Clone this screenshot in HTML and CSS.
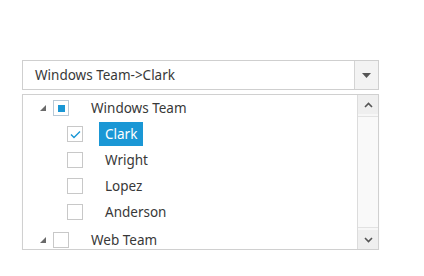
FILE: index.html
```html
<!DOCTYPE html>
<html>
<head>
<meta charset="utf-8">
<link rel="stylesheet" href="styles.css">
</head>
<body>
<div class="page">
  <div class="combo">
    <div class="combo-text">Windows Team-&gt;Clark</div>
    <div class="combo-btn">
      <svg width="9" height="5" viewBox="0 0 9 5"><path d="M0 0H9L4.5 5Z" fill="#555"/></svg>
    </div>
  </div>
  <div class="popup">
    <div class="tree">
      <div class="row lvl0">
        <span class="exp"><svg width="6" height="6" viewBox="0 0 6 6"><path d="M6 0V6H0Z" fill="#6a6a6a"/></svg></span>
        <span class="cb partial"><span class="dot"></span></span>
        <span class="label">Windows Team</span>
      </div>
      <div class="row lvl1">
        <span class="exp"></span>
        <span class="cb"><svg width="11" height="9" viewBox="0 0 11 9"><path d="M1 4.5L4 7.5L10 1.5" fill="none" stroke="#1a97d5" stroke-width="1.4"/></svg></span>
        <span class="label sel">Clark</span>
      </div>
      <div class="row lvl1">
        <span class="exp"></span>
        <span class="cb"></span>
        <span class="label">Wright</span>
      </div>
      <div class="row lvl1">
        <span class="exp"></span>
        <span class="cb"></span>
        <span class="label">Lopez</span>
      </div>
      <div class="row lvl1">
        <span class="exp"></span>
        <span class="cb"></span>
        <span class="label">Anderson</span>
      </div>
      <div class="row lvl0">
        <span class="exp"><svg width="6" height="6" viewBox="0 0 6 6"><path d="M6 0V6H0Z" fill="#6a6a6a"/></svg></span>
        <span class="cb"></span>
        <span class="label">Web Team</span>
      </div>
    </div>
    <div class="scrollbar">
      <div class="sb-btn"><svg width="9" height="6" viewBox="0 0 9 6"><path d="M1 5L4.5 1.5L8 5" fill="none" stroke="#555" stroke-width="1.6"/></svg></div>
      <div class="sb-thumb"></div>
      <div class="sb-btn"><svg width="9" height="6" viewBox="0 0 9 6"><path d="M1 1L4.5 4.5L8 1" fill="none" stroke="#555" stroke-width="1.6"/></svg></div>
    </div>
  </div>
</div>
</body>
</html>
```
FILE: styles.css
```css
html, body {
  margin: 0;
  background: #fff;
}
body {
  font-family: "Noto Sans", "Open Sans", sans-serif;
  font-size: 13.5px;
  color: #383838;
}
.page {
  padding: 60px 0 0 22px;
  width: 357px;
}
.combo {
  display: flex;
  height: 30px;
  box-sizing: border-box;
  border: 1px solid #cfcfcf;
}
.combo-text {
  flex: 1;
  display: flex;
  align-items: center;
  padding-left: 12px;
}
.combo-btn {
  width: 23px;
  border-left: 1px solid #d4d4d4;
  background: #f3f3f3;
  display: flex;
  align-items: center;
  justify-content: center;
}
.popup {
  margin-top: 4px;
  height: 156px;
  box-sizing: border-box;
  border: 1px solid #d0d0d0;
  display: flex;
  overflow: hidden;
  box-shadow: 0 1px 1px rgba(0,0,0,0.06);
}
.tree {
  flex: 1;
}
.row {
  height: 26px;
  display: flex;
  align-items: center;
}
.row:last-child {
  padding-top: 2px;
}
.lvl0 { padding-left: 14px; }
.lvl1 { padding-left: 28px; }
.exp {
  width: 12px;
  height: 12px;
  display: flex;
  align-items: center;
  justify-content: center;
}
.cb {
  margin-left: 4px;
  width: 16px;
  height: 16px;
  box-sizing: border-box;
  border: 1px solid #c8c8c8;
  background: #fff;
  display: flex;
  align-items: center;
  justify-content: center;
}
.cb.partial {
  border-color: #b9c9d6;
}
.dot {
  width: 7px;
  height: 7px;
  background: #1a97d5;
}
.label {
  margin-left: 16px;
  padding: 0 6px;
  height: 24px;
  display: flex;
  align-items: center;
}
.label.sel {
  background: #1a97d5;
  color: #fff;
}
.scrollbar {
  width: 20px;
  border-left: 1px solid #dcdcdc;
  background: #f7f7f7;
  display: flex;
  flex-direction: column;
}
.sb-btn {
  height: 19px;
  background: #efefef;
  display: flex;
  align-items: center;
  justify-content: center;
}
.sb-thumb {
  flex: 1;
  margin: 2px 0;
  background: #f9f9f9;
  border-top: 1px solid #e2e2e2;
  border-bottom: 1px solid #e2e2e2;
}
```
